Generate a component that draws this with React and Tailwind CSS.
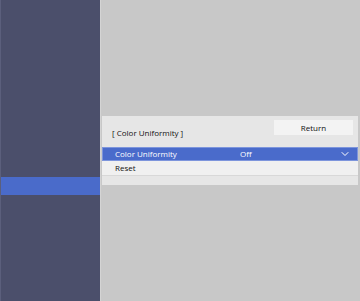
import { ChevronDown } from 'lucide-react';

export default function App() {
    return (
        <div className="flex h-[301px] w-[360px] overflow-hidden font-['Open_Sans','Noto_Sans',sans-serif] text-[8px]">
            <div className="w-[101px] bg-[#4b4f6b] border-l border-[#5b5f7c] border-r border-r-[#d4d4d4] pt-[177px]">
                <div className="h-[18px] bg-[#4a6bca]" />
            </div>
            <div className="flex-1 bg-[#c8c8c8] pt-[116px] pl-[1px] pr-[2px]">
                <div className="bg-[#e6e6e6]">
                    <div className="flex justify-between h-[31px] pl-[10px] pr-[5px] pt-[4px]">
                        <span className="mt-[7px] text-[#111] font-medium">[ Color Uniformity ]</span>
                        <button className="w-[79px] h-[15px] bg-[#f3f3f3] text-[#111] font-medium leading-[15px]">Return</button>
                    </div>
                    <div className="flex items-center h-[14px] bg-[#4a6bcb] border border-[#7d95dc] text-white font-medium pl-[12px] pr-[6px]">
                        <span className="w-[125px]">Color Uniformity</span>
                        <span className="flex-1">Off</span>
                        <ChevronDown size={12} strokeWidth={2} />
                    </div>
                    <div className="flex items-center h-[15px] bg-[#f0f0f0] text-[#111] font-medium pl-[13px] border-b border-[#d8d8d8]">Reset</div>
                    <div className="h-[9px]" />
                </div>
            </div>
        </div>
    );
}
